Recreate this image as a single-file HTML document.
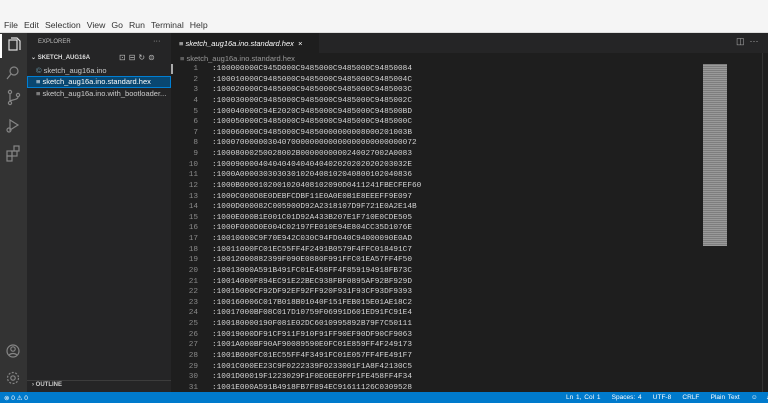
<!DOCTYPE html>
<html><head><meta charset="utf-8"><style>
*{margin:0;padding:0;box-sizing:border-box}
body{width:768px;height:403px;overflow:hidden;background:#1e1e1e;font-family:"Liberation Sans",sans-serif;position:relative}
.abs{position:absolute}
#top{left:0;top:0;width:768px;height:33px;background:#f5f5f5;border-bottom:1px solid #ddd}
#menu{left:4px;top:20px;font-size:8.7px;color:#333;white-space:nowrap}
#menu span{margin-right:6px}
#act{left:0;top:33px;width:27px;height:359px;background:#333}
#side{left:27px;top:33px;width:144px;height:359px;background:#252526}
#tabs{left:171px;top:33px;width:597px;height:20px;background:#252526}
#tab{left:171px;top:33px;width:148px;height:20px;background:#1e1e1e;color:#fff;font-size:7.5px;font-style:italic;padding:6px 0 0 8px;white-space:nowrap}
#crumb{left:180px;top:54px;font-size:7.5px;color:#999;white-space:nowrap}
#code{left:171px;top:64px;font-family:"Liberation Mono",monospace;font-size:7.75px;line-height:10.63px;white-space:pre;color:#d4d4d4}
#code .n{display:inline-block;width:27px;text-align:right;color:#8a8a8a;margin-right:14px}
#mini{left:703px;top:64px;width:24px;height:182px;background:#8a8a8a;background-image:repeating-linear-gradient(0deg,#9a9a9a 0 1px,#7e7e7e 1px 2px)}
#status{left:0;top:392px;width:768px;height:11px;background:#007acc;color:#fff;font-size:6.5px;white-space:nowrap}
.si{color:#ccc;font-size:7.5px;white-space:nowrap}
</style></head><body>
<div id="top" class="abs"></div>
<div id="menu" class="abs"><span>File</span><span>Edit</span><span>Selection</span><span>View</span><span>Go</span><span>Run</span><span>Terminal</span><span>Help</span></div>
<div id="act" class="abs"></div>
<div class="abs" style="left:0;top:34px;width:2px;height:24px;background:#fff"></div>
<svg class="abs" style="left:0;top:33px" width="27" height="359" fill="none" stroke="#858585" stroke-width="1.2">
<g stroke="#e0e0e0"><rect x="9" y="7" width="8" height="10"/><path d="M11 5h6l3 3v9"/></g>
<circle cx="14" cy="38" r="4"/><path d="M11 41l-4 5"/>
<circle cx="10" cy="59" r="1.6"/><circle cx="10" cy="70" r="1.6"/><circle cx="18" cy="62" r="1.6"/><path d="M10 61v7M18 64c0 3-8 3-8 4"/>
<path d="M10 87l8 5-8 5z"/><circle cx="9" cy="97" r="2"/>
<rect x="7" y="118" width="5" height="5"/><rect x="12" y="118" width="5" height="5"/><rect x="7" y="123" width="5" height="5"/><rect x="14" y="113" width="5" height="5"/>
<circle cx="13" cy="318" r="6"/><circle cx="13" cy="316" r="2.2"/><path d="M9 322c2-2 6-2 8 0"/>
<circle cx="13" cy="345" r="2.2"/><circle cx="13" cy="345" r="5.5" stroke-dasharray="2 1.5"/>
</svg>
<div id="side" class="abs"></div>
<div class="abs si" style="left:38px;top:39px;font-size:6px;color:#bbb">EXPLORER</div>
<div class="abs si" style="left:153px;top:36px;color:#bbb">···</div>
<div class="abs si" style="left:31px;top:54px;font-size:6px;font-weight:bold;color:#ddd">⌄ SKETCH_AUG16A</div>
<div class="abs si" style="left:119px;top:53px;font-size:8px;color:#bbb;letter-spacing:3px">⊡⊟↻⊜</div>
<div class="abs si" style="left:36px;top:66px"><span style="color:#6a9fb5">©</span> sketch_aug16a.ino</div>
<div class="abs" style="left:27px;top:76px;width:144px;height:12px;background:#094771;border:1px solid #007fd4"></div>
<div class="abs si" style="left:36px;top:77px;color:#fff">≡ sketch_aug16a.ino.standard.hex</div>
<div class="abs si" style="left:36px;top:89px">≡ sketch_aug16a.ino.with_bootloader...</div>
<div class="abs" style="left:27px;top:380px;width:144px;height:1px;background:#3c3c3c"></div>
<div class="abs si" style="left:32px;top:382px;font-size:6px;font-weight:bold">› OUTLINE</div>
<div id="tabs" class="abs"></div>
<div id="tab" class="abs">≡ sketch_aug16a.ino.standard.hex &nbsp;×</div>
<div class="abs si" style="left:736px;top:36px;font-size:9px;color:#aaa">◫ &nbsp;···</div>
<div id="crumb" class="abs">≡ sketch_aug16a.ino.standard.hex</div>
<div id="code" class="abs"><span class="n">1</span>:100000000C945D000C9485000C9485000C94850084
<span class="n">2</span>:100010000C9485000C9485000C9485000C9485004C
<span class="n">3</span>:100020000C9485000C9485000C9485000C9485003C
<span class="n">4</span>:100030000C9485000C9485000C9485000C9485002C
<span class="n">5</span>:100040000C94E2020C9485000C9485000C948500BD
<span class="n">6</span>:100050000C9485000C9485000C9485000C9485000C
<span class="n">7</span>:100060000C9485000C94850000000008000201003B
<span class="n">8</span>:1000700000030407000000000000000000000000072
<span class="n">9</span>:10008000250028002B0000000000240027002A0083
<span class="n">10</span>:10009000040404040404040402020202020203032E
<span class="n">11</span>:1000A0000303030301020408102040800102040836
<span class="n">12</span>:1000B0000102001020408102090D0411241FBECFEF60
<span class="n">13</span>:1000C000D8E0DEBFCDBF11E0A0E0B1E8EEEFF9E097
<span class="n">14</span>:1000D000082C005900D92A2318107D9F721E0A2E14B
<span class="n">15</span>:1000E000B1E001C01D92A433B207E1F710E0CDE505
<span class="n">16</span>:1000F000D0E004C02197FE010E94E804CC35D1076E
<span class="n">17</span>:10010000C9F70E942C030C94FD040C94000090E0AD
<span class="n">18</span>:10011000FC01EC55FF4F2491B0579F4FFC018491C7
<span class="n">19</span>:10012000882399F090E0880F991FFC01EA57FF4F50
<span class="n">20</span>:10013000A591B491FC01E458FF4F859194918FB73C
<span class="n">21</span>:10014000F894EC91E22BEC938FBF0895AF92BF929D
<span class="n">22</span>:10015000CF92DF92EF92FF920F931F93CF93DF9393
<span class="n">23</span>:100160006C017B018B01040F151FEB015E01AE18C2
<span class="n">24</span>:10017000BF08C017D10759F06991D601ED91FC91E4
<span class="n">25</span>:100180000190F081E02DC6010995892B79F7C50111
<span class="n">26</span>:10019000DF91CF911F910F91FF90EF90DF90CF9063
<span class="n">27</span>:1001A000BF90AF90089590E0FC01E859FF4F249173
<span class="n">28</span>:1001B000FC01EC55FF4F3491FC01E057FF4FE491F7
<span class="n">29</span>:1001C000EE23C9F0222339F0233001F1A8F42130C5
<span class="n">30</span>:1001D00019F1223029F1F0E0EE0FFF1FE458FF4F34
<span class="n">31</span>:1001E000A591B4918FB7F894EC91611126C0309528</div>
<div class="abs" style="left:171px;top:64px;width:2px;height:10px;background:#aaa"></div>
<div id="mini" class="abs"></div>
<div class="abs" style="left:762px;top:53px;width:1px;height:339px;background:#333"></div>
<div id="status" class="abs">
<span class="abs" style="left:4px;top:2px">⊗ 0 ⚠ 0</span>
<span class="abs" style="left:566px;top:2px;word-spacing:1px">Ln 1, Col 1 &nbsp;&nbsp; Spaces: 4 &nbsp;&nbsp; UTF-8 &nbsp;&nbsp; CRLF &nbsp;&nbsp; Plain Text &nbsp;&nbsp; ☺ &nbsp; ♫</span>
</div>
</body></html>
